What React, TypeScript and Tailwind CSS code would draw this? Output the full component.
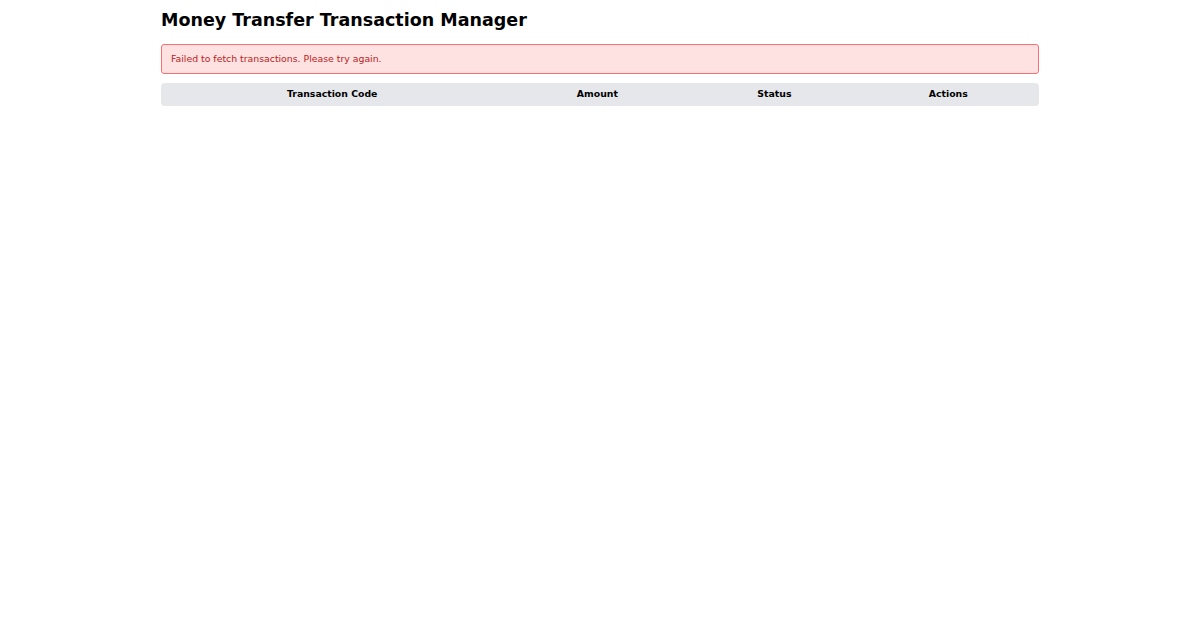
export default function App() {
  const headers = ["Transaction Code", "Amount", "Status", "Actions"];

  return (
    <div className="min-h-screen bg-white font-['DejaVu_Sans',sans-serif]">
      <div className="mx-auto max-w-[878px] pt-[6px]">
        <h1 className="text-[17.5px] font-bold leading-[28px] text-black mb-[10px]">
          Money Transfer Transaction Manager
        </h1>

        {/* Error alert */}
        <div className="rounded-[3px] border border-[#f87171] bg-[#fee2e2] px-[9px] py-[7px] text-[9.33px] leading-[14px] text-[#b91c1c] mb-[9px]">
          Failed to fetch transactions. Please try again.
        </div>

        <table className="w-full border-collapse">
          <thead>
            <tr className="bg-[#e5e7eb]">
              {headers.map((h, i) => (
                <th
                  key={h}
                  className={`px-[9.5px] pt-[5px] pb-[6px] text-center text-[9.33px] font-bold leading-[12px] text-black ${
                    i === 0 ? "rounded-l-[4px]" : ""
                  } ${i === headers.length - 1 ? "rounded-r-[4px]" : ""}`}
                >
                  {h}
                </th>
              ))}
            </tr>
          </thead>
          <tbody></tbody>
        </table>
      </div>
    </div>
  );
}
